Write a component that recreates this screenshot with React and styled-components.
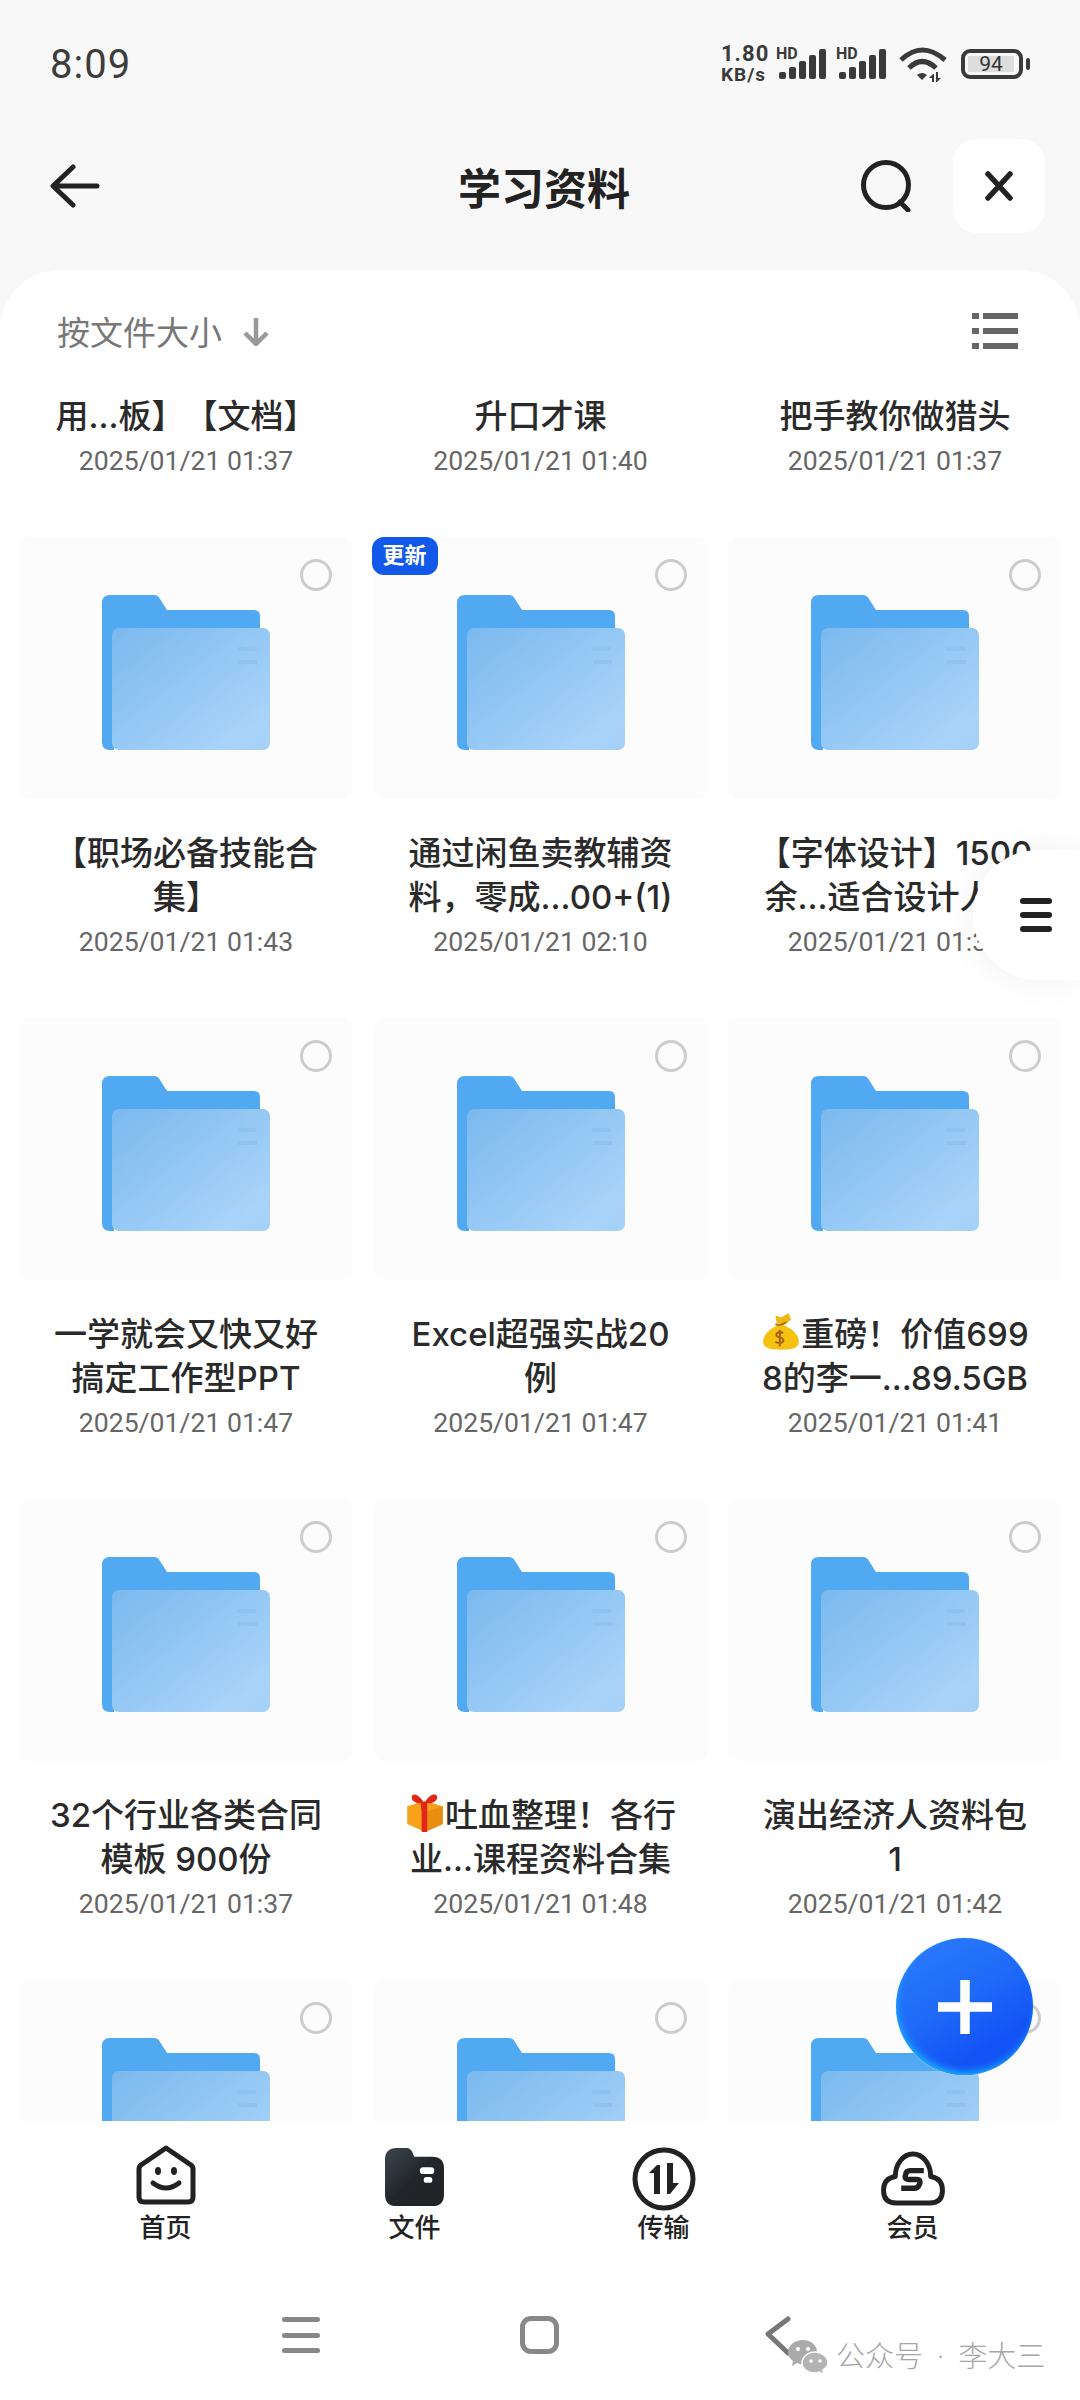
import React from "react";
import styled, { createGlobalStyle } from "styled-components";

const GlobalStyle = createGlobalStyle`
  html, body {
    margin: 0;
    padding: 0;
    background: #ffffff;
  }
  * {
    box-sizing: border-box;
  }
`;

const Page = styled.div`
  position: relative;
  width: 1080px;
  height: 2400px;
  overflow: hidden;
  display: flex;
  flex-direction: column;
  background: #f8f8f8;
  font-family: Roboto, "Noto Sans CJK SC", sans-serif;
`;

const StatusBar = styled.div`
  height: 126px;
  flex: none;
  display: flex;
  align-items: center;
  justify-content: space-between;
  padding: 2px 50px 0;
  color: #3a3a3a;
`;

const Clock = styled.div`
  font-size: 40px;
  letter-spacing: 1px;
  color: #3c3c3c;
`;

const StatusIcons = styled.div`
  display: flex;
  align-items: center;
`;

const NetSpeed = styled.div`
  width: 56px;
  font-size: 22px;
  line-height: 21px;
  font-weight: 700;
  letter-spacing: 1px;
  text-align: left;
  span {
    display: block;
    font-size: 19px;
    letter-spacing: 1px;
  }
`;

const Signal = styled.svg`
  width: 50px;
  height: 34px;
  margin-right: 10px;
  overflow: visible;
`;

const Wifi = styled.svg`
  width: 48px;
  height: 36px;
  margin: 0 14px 0 2px;
`;

const Battery = styled.div`
  position: relative;
  width: 62px;
  height: 30px;
  padding: 3px;
  border: 4px solid #3a3a3a;
  border-radius: 9px;
  margin-right: 7px;
  &::after {
    content: "";
    position: absolute;
    right: -11px;
    top: 5px;
    width: 4px;
    height: 12px;
    border-radius: 2px;
    background: #3a3a3a;
  }
`;

const BatteryLevel = styled.div`
  width: 46px;
  height: 16px;
  background: #dddddd;
  font-size: 21px;
  line-height: 16px;
  text-align: center;
  color: #333333;
`;

const Header = styled.div`
  height: 120px;
  flex: none;
  margin-bottom: 24px;
  padding: 0 35px 0 50px;
  display: flex;
  align-items: center;
`;

const BackIcon = styled.svg`
  width: 50px;
  height: 44px;
  flex: none;
`;

const Title = styled.div`
  flex: 1;
  padding-left: 128px;
  text-align: center;
  font-size: 43px;
  font-weight: 700;
  color: #222222;
`;

const SearchIcon = styled.svg`
  width: 54px;
  height: 52px;
  flex: none;
  margin-right: 39px;
`;

const CloseButton = styled.div`
  width: 92px;
  height: 94px;
  flex: none;
  display: flex;
  align-items: center;
  justify-content: center;
  background: #ffffff;
  border-radius: 24px;
`;

const Sheet = styled.div`
  flex: 1;
  min-height: 0;
  display: flex;
  flex-direction: column;
  background: #ffffff;
  border-radius: 60px 60px 0 0;
`;

const SortRow = styled.div`
  height: 116px;
  flex: none;
  padding: 6px 62px 0 57px;
  display: flex;
  align-items: center;
  justify-content: space-between;
`;

const SortLabel = styled.div`
  display: flex;
  align-items: center;
  gap: 20px;
  font-size: 33px;
  color: #777777;
`;

const FileList = styled.div`
  flex: 1;
  min-height: 0;
  overflow: hidden;
  padding: 8px 0 0 20px;
  display: grid;
  grid-template-columns: repeat(3, 332px);
  grid-auto-rows: min-content;
  column-gap: 22.5px;
  row-gap: 56px;
`;

const Cell = styled.div`
  min-width: 0;
`;

const Card = styled.div`
  position: relative;
  height: 262px;
  margin: 0 -1px 32px;
  padding-top: 58px;
  display: flex;
  justify-content: center;
  align-items: flex-start;
  background: #fcfcfc;
  border-radius: 10px;
`;

const Radio = styled.div`
  position: absolute;
  top: 22px;
  right: 21px;
  width: 32px;
  height: 32px;
  border: 3.5px solid #cccccc;
  border-radius: 50%;
`;

const NewBadge = styled.div`
  position: absolute;
  top: 0;
  left: -2px;
  width: 66px;
  height: 38px;
  background: #1259ea;
  border-radius: 12px;
  color: #ffffff;
  font-size: 22px;
  font-weight: 700;
  line-height: 37px;
  text-align: center;
`;

const FileName = styled.div`
  font-family: Inter, "Noto Sans CJK SC", sans-serif;
  font-size: 33px;
  font-weight: 500;
  line-height: 44px;
  text-align: center;
  white-space: pre-line;
  text-spacing-trim: space-all;
  color: #2a2a2a;
`;

const FileDate = styled.div`
  margin-top: 3px;
  height: 40px;
  font-size: 26.6px;
  line-height: 40px;
  text-align: center;
  color: #666666;
`;

const Emoji = styled.svg`
  width: 40px;
  height: 40px;
  vertical-align: -6px;
`;

const TabBar = styled.div`
  height: 120px;
  flex: none;
  padding: 24px 0 0 41px;
  display: grid;
  grid-template-columns: repeat(4, 249px);
`;

const Tab = styled.div`
  display: flex;
  flex-direction: column;
  align-items: center;
`;

const TabIcon = styled.div`
  height: 70px;
  padding-top: ${(p) => p.$offset}px;
  display: flex;
  align-items: flex-start;
`;

const TabLabel = styled.div`
  font-size: 26px;
  line-height: 26px;
  font-weight: 500;
  color: #222222;
`;

const SystemBar = styled.div`
  height: 159px;
  flex: none;
  padding: 75px 0 0 182px;
  display: grid;
  grid-template-columns: repeat(3, 238.5px);
  justify-items: center;
  align-items: start;
`;

const SystemLines = styled.div`
  width: 38px;
  height: 38px;
  display: flex;
  flex-direction: column;
  justify-content: space-between;
  padding: 1px 0;
  span {
    height: 5px;
    border-radius: 3px;
    background: #888888;
  }
`;

const SystemSquare = styled.div`
  width: 39px;
  height: 38px;
  border: 5px solid #888888;
  border-radius: 11px;
`;

const Fab = styled.div`
  position: absolute;
  left: 896px;
  top: 1938px;
  width: 137px;
  height: 137px;
  border-radius: 50%;
  display: flex;
  align-items: center;
  justify-content: center;
  background: linear-gradient(150deg, #2c7dfb 0%, #1f6af8 45%, #1253f5 75%);
  box-shadow: inset 2px -5px 8px -3px #1cc4ff, 0 0 2px #b8e6ff;
`;

const SideHandle = styled.div`
  position: absolute;
  right: 0;
  top: 850px;
  width: 107px;
  height: 130px;
  border-radius: 65px 0 0 65px;
  background: #ffffff;
  box-shadow: 0 0 36px rgba(0, 0, 0, 0.06);
  display: flex;
  flex-direction: column;
  justify-content: center;
  gap: 8px;
  padding-left: 47px;
  span {
    width: 32px;
    height: 6px;
    border-radius: 3px;
    background: #222222;
  }
`;

const Watermark = styled.div`
  position: absolute;
  left: 788px;
  top: 2336px;
  display: flex;
  align-items: center;
  gap: 8px;
  font-size: 29px;
  font-weight: 300;
  line-height: 42px;
  word-spacing: 7px;
  color: #a6a6a6;
`;

const Folder = () => (
  <svg width="168" height="155" viewBox="0 0 168 155">
    <defs>
      <linearGradient id="folderFront" x1="0" y1="0" x2="1" y2="1">
        <stop offset="0" stopColor="#7ab9ee" />
        <stop offset="0.85" stopColor="#a9d3f9" />
        <stop offset="1" stopColor="#a5d0f7" />
      </linearGradient>
    </defs>
    <path
      d="M8 0H52Q56 0 58 4L65 15H152Q158 15 158 21V60H12V155H8Q0 155 0 147V8Q0 0 8 0Z"
      fill="#51a9f1"
    />
    <rect x="10" y="33" width="158" height="122" rx="7" fill="url(#folderFront)" />
    <rect x="135" y="52" width="19" height="4" fill="#8fc3ee" />
    <rect x="136" y="65" width="19" height="4" fill="#8fc3ee" />
  </svg>
);

const MoneyBag = () => (
  <Emoji viewBox="0 0 36 36">
    <path d="M18 11C8 14 1 21 2 28C3 33 9 34 18 34C27 34 33 33 34 28C35 21 28 14 18 11Z" fill="#f5c211" />
    <path d="M14 10L13 3L18 5L25 1L27 7L22 11Z" fill="#eeb80f" />
    <path d="M13 11Q18 13 23 9" stroke="#a8761a" strokeWidth="2" fill="none" />
    <path
      d="M20 19Q16 17 14 19.500Q13 22 17 23Q21 24 20 26.500Q18 29 13 27M17 16V31"
      stroke="#a3620f"
      strokeWidth="1.800"
      fill="none"
    />
  </Emoji>
);

const Gift = () => (
  <Emoji viewBox="0 0 36 36">
    <path d="M2 12L18 7L34 12V28L18 35L2 28Z" fill="#f9a11b" />
    <path d="M18 17L34 12V28L18 35Z" fill="#e98c12" />
    <path d="M14 9L20 7.5V35H15V17Z" fill="#e2261b" />
    <path d="M17 9C12 0 6 0 6 4C6 8 12 10 17 9ZM18 9C22 0 29 0 29 4C29 8 23 10 18 9Z" fill="#e2261b" />
  </Emoji>
);

const HomeIcon = () => (
  <svg width="60" height="60" viewBox="0 0 60 60">
    <path
      d="M30 3L55 20Q57 21.500 57 24V52Q57 57 52 57H8Q3 57 3 52V24Q3 21.500 5 20Z"
      fill="none"
      stroke="#222"
      strokeWidth="5"
      strokeLinejoin="round"
    />
    <ellipse cx="22" cy="26" rx="3" ry="4" fill="#222" />
    <ellipse cx="38" cy="26" rx="3" ry="4" fill="#222" />
    <path d="M17 38Q30 48 43 38" fill="none" stroke="#222" strokeWidth="5" strokeLinecap="round" />
  </svg>
);

const FilesIcon = () => (
  <svg width="61" height="58" viewBox="0 0 61 60">
    <defs>
      <linearGradient id="filesFill" x1="0" y1="0" x2="1" y2="1">
        <stop offset="0" stopColor="#3c4650" />
        <stop offset="0.5" stopColor="#22262a" />
        <stop offset="1" stopColor="#202224" />
      </linearGradient>
    </defs>
    <path
      d="M12 0H22Q27 0 29 6L30 9H49Q61 9 61 21V48Q61 60 49 60H12Q0 60 0 48V12Q0 0 12 0Z"
      fill="url(#filesFill)"
    />
    <rect x="36" y="20" width="15" height="7" rx="3.500" fill="#fff" />
    <rect x="40" y="30" width="9" height="6" rx="3" fill="#fff" />
  </svg>
);

const TransferIcon = () => (
  <svg width="64" height="64" viewBox="0 0 64 64">
    <circle cx="32" cy="32" r="29" fill="none" stroke="#222" strokeWidth="5" />
    <path d="M17 26L25 18H28V47H22V26Z" fill="#222" />
    <path d="M35 16H41V36L47 36L38 47H35Z" fill="#222" />
  </svg>
);

const MemberIcon = () => (
  <svg width="66" height="55" viewBox="0 0 66 56">
    <path
      d="M16 53Q3 53 3 40Q3 28 15 26C15 13 23 3 33 3C43 3 51 13 51 26Q63 28 63 40Q63 53 50 53Z"
      fill="none"
      stroke="#222"
      strokeWidth="5"
      strokeLinejoin="round"
    />
    <path
      d="M44 20H30Q26 20 25.500 24L25 26Q25 29 29 29H37Q41 29 40 33L39 35Q38 38 34 38H21"
      fill="none"
      stroke="#222"
      strokeWidth="5.500"
    />
  </svg>
);

const WechatIcon = () => (
  <svg width="40" height="36" viewBox="0 0 40 36">
    <path d="M15 1C7 1 0 6 0 13C0 17 2 20 5 22L4 27L9 24C11 25 13 25 15 25C23 25 29 19 29 13C29 6 23 1 15 1Z" fill="#aaaaaa" />
    <path d="M27 13C20 13 14 18 14 24C14 30 20 34 27 34C28 34 30 34 31 33L36 36L35 31C38 29 40 27 40 24C40 18 34 13 27 13Z" fill="#b4b4b4" stroke="#ffffff" strokeWidth="1.500" />
    <circle cx="10" cy="10" r="2" fill="#fff" />
    <circle cx="20" cy="10" r="2" fill="#fff" />
    <circle cx="23" cy="22" r="1.800" fill="#fff" />
    <circle cx="32" cy="22" r="1.800" fill="#fff" />
  </svg>
);

const SignalBars = () => (
  <Signal viewBox="0 0 50 34">
    <text x="-1" y="12" fontSize="16" fontWeight="700" fill="#3a3a3a" fontFamily="Roboto, sans-serif">HD</text>
    <rect x="2" y="25" width="7" height="7" rx="2" fill="#3a3a3a" />
    <rect x="12" y="20" width="7" height="12" rx="2" fill="#3a3a3a" />
    <rect x="22" y="14" width="7" height="18" rx="2" fill="#3a3a3a" />
    <rect x="32" y="8" width="7" height="24" rx="2" fill="#3a3a3a" />
    <rect x="42" y="2" width="7" height="30" rx="2" fill="#3a3a3a" />
  </Signal>
);

const rows = [
  [
    { name: "【职场必备技能合\n集】", date: "2025/01/21 01:43" },
    { name: "通过闲鱼卖教辅资\n料\uFF0C零成...00+(1)", date: "2025/01/21 02:10", isNew: true },
    { name: "【字体设计】1500\n余...适合设计人员", date: "2025/01/21 01:37" },
  ],
  [
    { name: "一学就会又快又好\n搞定工作型PPT", date: "2025/01/21 01:47" },
    { name: "Excel超强实战20\n例", date: "2025/01/21 01:47" },
    { icon: <MoneyBag />, name: "重磅\uFF01价值699\n8的李一...89.5GB", date: "2025/01/21 01:41" },
  ],
  [
    { name: "32个行业各类合同\n模板 900份", date: "2025/01/21 01:37" },
    { icon: <Gift />, name: "吐血整理\uFF01各行\n业...课程资料合集", date: "2025/01/21 01:48" },
    { name: "演出经济人资料包\n1", date: "2025/01/21 01:42" },
  ],
  [{}, {}, {}],
];

const scrolledOff = [
  { name: "用...板】【文档】", date: "2025/01/21 01:37" },
  { name: "升口才课", date: "2025/01/21 01:40" },
  { name: "把手教你做猎头", date: "2025/01/21 01:37" },
];

const tabs = [
  { label: "首页", icon: <HomeIcon />, offset: 0 },
  { label: "文件", icon: <FilesIcon />, offset: 3 },
  { label: "传输", icon: <TransferIcon />, offset: 2 },
  { label: "会员", icon: <MemberIcon />, offset: 6 },
];

function FileCell({ file }) {
  return (
    <Cell>
      <Card>
        {file.isNew && <NewBadge>更新</NewBadge>}
        <Radio />
        <Folder />
      </Card>
      {file.name && (
        <>
          <FileName>
            {file.icon}
            {file.name}
          </FileName>
          <FileDate>{file.date}</FileDate>
        </>
      )}
    </Cell>
  );
}

export default function App() {
  return (
    <Page>
      <GlobalStyle />
      <StatusBar>
        <Clock>8:09</Clock>
        <StatusIcons>
          <NetSpeed>
            1.80
            <span>KB/s</span>
          </NetSpeed>
          <SignalBars />
          <SignalBars />
          <Wifi viewBox="0 0 48 36">
            <path d="M2 14Q23 -6 46 14" fill="none" stroke="#3a3a3a" strokeWidth="5" />
            <path d="M10 22Q23 9 37 22" fill="none" stroke="#3a3a3a" strokeWidth="5" />
            <path d="M18 29Q23 25 28 29L23 34Z" fill="#3a3a3a" />
            <path d="M34 28L30 32H33V36H35V28ZM38 36L42 32H39V26H37V36Z" fill="#3a3a3a" />
          </Wifi>
          <Battery>
            <BatteryLevel>94</BatteryLevel>
          </Battery>
        </StatusIcons>
      </StatusBar>

      <Header>
        <BackIcon viewBox="0 0 50 44">
          <path
            d="M23 3L3 22L23 41M4 22H47"
            fill="none"
            stroke="#222"
            strokeWidth="5"
            strokeLinecap="round"
            strokeLinejoin="round"
          />
        </BackIcon>
        <Title>学习资料</Title>
        <SearchIcon viewBox="0 0 54 52">
          <circle cx="26" cy="25" r="22.500" fill="none" stroke="#222" strokeWidth="5" />
          <path d="M40 42L48 50" stroke="#222" strokeWidth="5" strokeLinecap="round" />
        </SearchIcon>
        <CloseButton>
          <svg width="30" height="30" viewBox="0 0 30 30">
            <path
              d="M4 3L26 27M26 3L4 27"
              stroke="#222"
              strokeWidth="5.500"
              strokeLinecap="round"
            />
          </svg>
        </CloseButton>
      </Header>

      <Sheet>
        <SortRow>
          <SortLabel>
            按文件大小
            <svg width="28" height="30" viewBox="0 0 28 30">
              <path
                d="M14 2V27M3 17L14 28L25 17"
                fill="none"
                stroke="#999"
                strokeWidth="4.500"
              />
            </svg>
          </SortLabel>
          <svg width="46" height="36" viewBox="0 0 46 36">
            <g fill="#666">
              <rect x="0" y="0" width="7" height="6" />
              <rect x="11" y="0" width="35" height="6" />
              <rect x="0" y="15" width="7" height="6" />
              <rect x="11" y="15" width="35" height="6" />
              <rect x="0" y="30" width="7" height="6" />
              <rect x="11" y="30" width="35" height="6" />
            </g>
          </svg>
        </SortRow>

        <FileList>
          {scrolledOff.map((file) => (
            <Cell key={file.name}>
              <FileName>{file.name}</FileName>
              <FileDate>{file.date}</FileDate>
            </Cell>
          ))}
          {rows.flat().map((file, i) => (
            <FileCell key={i} file={file} />
          ))}
        </FileList>

        <TabBar>
          {tabs.map((tab) => (
            <Tab key={tab.label}>
              <TabIcon $offset={tab.offset}>{tab.icon}</TabIcon>
              <TabLabel>{tab.label}</TabLabel>
            </Tab>
          ))}
        </TabBar>

        <SystemBar>
          <SystemLines>
            <span />
            <span />
            <span />
          </SystemLines>
          <SystemSquare />
          <svg width="26" height="40" viewBox="0 0 26 40">
            <path
              d="M23 3L3 18L23 37"
              fill="none"
              stroke="#777"
              strokeWidth="5"
              strokeLinecap="round"
              strokeLinejoin="round"
            />
          </svg>
        </SystemBar>
      </Sheet>

      <SideHandle>
        <span />
        <span />
        <span />
      </SideHandle>

      <Fab>
        <svg width="54" height="54" viewBox="0 0 54 54">
          <path d="M27 0V54M0 27H54" stroke="#fff" strokeWidth="9.500" />
        </svg>
      </Fab>

      <Watermark>
        <WechatIcon />
        公众号 · 李大三
      </Watermark>
    </Page>
  );
}
